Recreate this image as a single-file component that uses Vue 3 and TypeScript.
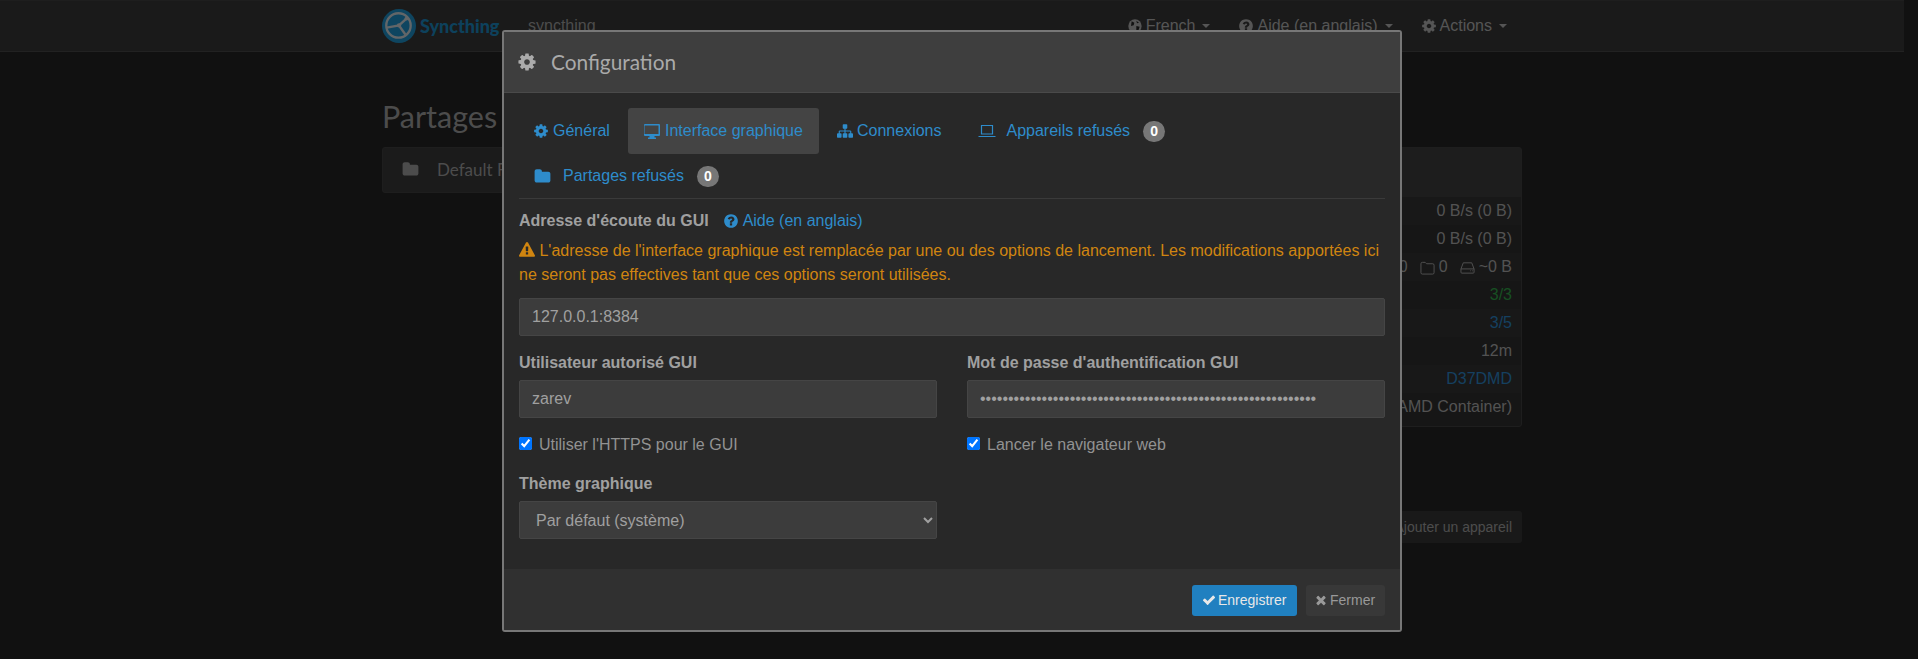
<script setup lang="ts">
const gear = 'M1152 896q0-106-75-181t-181-75-181 75-75 181 75 181 181 75 181-75 75-181zm512-109v222q0 12-8 23t-20 13l-185 28q-19 54-39 91 35 50 107 138 10 12 10 25t-9 23q-27 37-99 108t-94 71q-12 0-26-9l-138-108q-44 23-91 38-16 136-29 186-7 28-36 28h-222q-14 0-24.500-8.500t-11.500-21.500l-28-184q-49-16-90-37l-141 107q-10 9-25 9-14 0-25-11-126-114-165-168-7-10-7-23 0-12 8-23 15-21 51-66.500t54-70.500q-27-50-41-99l-183-27q-13-2-21-12.500t-8-23.500v-222q0-12 8-23t19-13l186-28q14-46 39-92-40-57-107-138-10-12-10-24 0-10 9-23 26-36 98.500-107.500t94.500-71.500q13 0 26 10l138 107q44-23 91-38 16-136 29-186 7-28 36-28h222q14 0 24.500 8.500t11.500 21.500l28 184q49 16 90 37l142-107q9-9 24-9 13 0 25 10 129 119 165 170 7 8 7 22 0 12-8 23-15 21-51 66.500t-54 70.500q26 50 41 98l183 28q13 2 21 12.500t8 23.500z'
const folder = 'M1728 608v704q0 92-66 158t-158 66h-1216q-92 0-158-66t-66-158v-960q0-92 66-158t158-66h320q92 0 158 66t66 158v32h672q92 0 158 66t66 158z'
const sitemap = 'M1792 1248v320q0 40-28 68t-68 28h-320q-40 0-68-28t-28-68v-320q0-40 28-68t68-28h96v-192h-512v192h96q40 0 68 28t28 68v320q0 40-28 68t-68 28h-320q-40 0-68-28t-28-68v-320q0-40 28-68t68-28h96v-192h-512v192h96q40 0 68 28t28 68v320q0 40-28 68t-68 28h-320q-40 0-68-28t-28-68v-320q0-40 28-68t68-28h96v-192q0-52 38-90t90-38h512v-192h-96q-40 0-68-28t-28-68v-320q0-40 28-68t68-28h320q40 0 68 28t28 68v320q0 40-28 68t-68 28h-96v192h512q52 0 90 38t38 90v192h96q40 0 68 28t28 68z'
const question = 'M1024 1376v-192q0-14-9-23t-23-9h-192q-14 0-23 9t-9 23v192q0 14 9 23t23 9h192q14 0 23-9t9-23zm256-672q0-88-55.500-163t-138.500-116-170-41q-243 0-371 213-15 24 8 42l132 100q7 6 19 6 16 0 25-12 53-68 86-92 34-24 86-24 48 0 85.500 26t37.500 59q0 38-20 61t-68 45q-63 28-115.500 86.500t-52.500 125.500v36q0 14 9 23t23 9h192q14 0 23-9t9-23q0-19 21.500-49.500t54.500-49.500q32-18 49-28.500t46-35 44.500-48 28-60.500 12.500-81zm384 192q0 209-103 385.500t-279.500 279.500-385.500 103-385.500-103-279.500-279.500-103-385.500 103-385.500 279.500-279.500 385.500-103 385.500 103 279.500 279.500 103 385.500z'
const warning = 'M1024 1375v-190q0-14-9.500-23.500t-22.500-9.500h-192q-13 0-22.500 9.500t-9.500 23.500v190q0 14 9.500 23.500t22.500 9.500h192q13 0 22.500-9.500t9.500-23.500zm-2-374l18-459q0-12-10-19-13-11-24-11h-220q-11 0-24 11-10 7-10 21l17 457q0 10 10 16.500t24 6.500h185q14 0 23.500-6.500t10.500-16.500zm-14-934l768 1408q35 63-2 126-17 29-46.500 46t-63.500 17h-1536q-34 0-63.500-17t-46.500-46q-37-63-2-126l768-1408q17-31 47-49t65-18 65 18 47 49z'
const check = 'M1671 566q0 40-28 68l-724 724-136 136q-28 28-68 28t-68-28l-136-136-362-362q-28-28-28-68t28-68l136-136q28-28 68-28t68 28l294 295 656-657q28-28 68-28t68 28l136 136q28 28 28 68z'
const times = 'M1490 1322q0 40-28 68l-136 136q-28 28-68 28t-68-28l-294-294-294 294q-28 28-68 28t-68-28l-136-136q-28-28-28-68t28-68l294-294-294-294q-28-28-28-68t28-68l136-136q28-28 68-28t68 28l294 294 294-294q28-28 68-28t68 28l136 136q28 28 28 68t-28 68l-294 294 294 294q28 28 28 68z'
const desktop = 'M1 0h15q1 0 1 1v10q0 1-1 1h-4.500v1.500h1.500v1.500h-8v-1.500h1.500v-1.500h-4.500q-1 0-1-1v-10q0-1 1-1zM1.500 1.500v8.500h14v-8.500z'

const rows = [
  { text: '0 B/s (0 B)', tone: '' },
  { text: '0 B/s (0 B)', tone: '' },
  { text: 'stats', tone: '' },
  { text: '3/3', tone: 'ok' },
  { text: '3/5', tone: 'info' },
  { text: '12m', tone: '' },
  { text: 'D37DMD', tone: 'info' },
  { text: 'Linux (64 bits, AMD Container)', tone: '' },
]
const password = '•'.repeat(60)
</script>

<template>
  <div class="page">
    <header class="navbar">
      <div class="nav-inner">
        <div class="brand">
          <svg class="logo" viewBox="0 0 32 32">
            <circle cx="16" cy="16" r="16" fill="#1c8ac0" />
            <circle cx="15.500" cy="15.500" r="11.500" fill="none" stroke="#c4ccd0" stroke-width="2.200" />
            <path d="M4.500 17.500 16 15.500 23 9M16 15.500 22 24" fill="none" stroke="#c4ccd0" stroke-width="2.200" />
            <circle cx="16" cy="15.500" r="2" fill="#c4ccd0" />
            <circle cx="23" cy="9" r="1.800" fill="#c4ccd0" />
          </svg>
          <span class="brand-name">Syncthing</span>
        </div>
        <span class="host">syncthing</span>
        <nav class="nav-right">
          <span class="nav-item">
            <svg class="ico" viewBox="0 0 24 24"><circle cx="12" cy="12" r="10" fill="currentColor" /><path d="M7 5l4 2-1 4-4 1zM14 12l5 1-2 6-3 1zM14 4l4 3-3 1z" fill="#222" /></svg>
            French<i class="caret"></i>
          </span>
          <span class="nav-item">
            <svg class="ico" viewBox="0 0 1792 1792"><path :d="question" fill="currentColor" /></svg>
            Aide (en anglais)<i class="caret"></i>
          </span>
          <span class="nav-item">
            <svg class="ico" viewBox="0 0 1792 1792"><path :d="gear" fill="currentColor" /></svg>
            Actions<i class="caret"></i>
          </span>
        </nav>
      </div>
    </header>

    <main class="container">
      <section class="col">
        <h1 class="col-title">Partages</h1>
        <div class="panel folder-panel">
          <svg class="ico folder-ico" viewBox="0 0 1792 1792"><path :d="folder" fill="currentColor" /></svg>
          <span class="folder-name">Default Folder</span>
        </div>
      </section>
      <section class="col right-col">
        <div class="panel device-panel">
          <div class="device-head"></div>
          <div v-for="(row, i) in rows" :key="i" class="device-row" :class="row.tone">
            <template v-if="row.text === 'stats'">
              <span class="stat">0</span>
              <svg class="stat-ico" viewBox="0 0 16 16"><path d="M1 13.500V4q0-1.500 1.500-1.500h3L7 4h6.500Q15 4 15 5.500v8Q15 15 13.500 15h-11Q1 15 1 13.500z" fill="none" stroke="currentColor" /></svg>
              <span class="stat">0</span>
              <svg class="stat-ico" viewBox="0 0 16 16"><path d="M1 9.500 3.500 3h9L15 9.500V13q0 1-1 1H2q-1 0-1-1zM1 9.500h14M11 11.500h.8M13 11.500h.8" fill="none" stroke="currentColor" /></svg>
              <span>~0 B</span>
            </template>
            <template v-else>{{ row.text }}</template>
          </div>
        </div>
        <div class="add-row"><span class="add-btn">Ajouter un appareil</span></div>
      </section>
    </main>

    <div class="backdrop"></div>
    <div class="overlay">
      <div class="modal">
        <div class="modal-head">
          <svg class="ico head-ico" viewBox="0 0 1792 1792"><path :d="gear" fill="currentColor" /></svg>
          <h2 class="modal-title">Configuration</h2>
        </div>
        <div class="modal-body">
          <ul class="tabs">
            <li class="tab t-general"><svg class="ico" viewBox="0 0 1792 1792"><path :d="gear" fill="currentColor" /></svg>Général</li>
            <li class="tab t-gui active"><svg class="ico ico-wide" viewBox="0 0 17 15"><path :d="desktop" fill="currentColor" fill-rule="evenodd" /></svg>Interface graphique</li>
            <li class="tab t-conn"><svg class="ico" viewBox="0 0 1792 1792"><path :d="sitemap" fill="currentColor" /></svg>Connexions</li>
            <li class="tab t-dev">
              <svg class="ico laptop" viewBox="0 0 18 16"><path d="M3.500 2.500h11v8.500h-11zM.5 13.500h17" fill="none" stroke="currentColor" stroke-width="1.200" /></svg>
              <span class="tab-text">Appareils refusés</span><span class="badge">0</span>
            </li>
            <li class="tab t-fold">
              <svg class="ico fold" viewBox="0 0 1792 1792"><path :d="folder" fill="currentColor" /></svg>
              <span class="tab-text">Partages refusés</span><span class="badge">0</span>
            </li>
          </ul>

          <div class="field-head">
            <label class="label">Adresse d'écoute du GUI</label>
            <a class="help"><svg class="ico" viewBox="0 0 1792 1792"><path :d="question" fill="currentColor" /></svg>Aide (en anglais)</a>
          </div>
          <p class="warn">
            <svg class="ico warn-ico" viewBox="0 0 1792 1792"><path :d="warning" fill="currentColor" /></svg>
            L'adresse de l'interface graphique est remplacée par une ou des options de lancement. Les modifications apportées ici ne seront pas effectives tant que ces options seront utilisées.
          </p>
          <input class="control" type="text" value="127.0.0.1:8384" readonly />

          <div class="grid">
            <div class="cell">
              <label class="label">Utilisateur autorisé GUI</label>
              <input class="control" type="text" value="zarev" readonly />
              <label class="checkline"><input type="checkbox" checked />Utiliser l'HTTPS pour le GUI</label>
            </div>
            <div class="cell">
              <label class="label">Mot de passe d'authentification GUI</label>
              <input class="control" type="password" :value="password" readonly />
              <label class="checkline"><input type="checkbox" checked />Lancer le navigateur web</label>
            </div>
            <div class="cell">
              <label class="label theme-label">Thème graphique</label>
              <select class="control select">
                <option>Par défaut (système)</option>
              </select>
            </div>
          </div>
        </div>
        <div class="modal-foot">
          <button class="btn primary" type="button"><svg class="ico" viewBox="0 0 1792 1792"><path :d="check" fill="currentColor" /></svg>Enregistrer</button>
          <button class="btn plain" type="button"><svg class="ico" viewBox="0 0 1792 1792"><path :d="times" fill="currentColor" /></svg>Fermer</button>
        </div>
      </div>
    </div>
  </div>
</template>

<style>
html, body { margin: 0; background: #222; }
</style>

<style scoped>
.page {
  width: 1904px;
  height: 659px;
  overflow: hidden;
  font-family: "Liberation Sans", Arial, sans-serif;
  font-size: 16px;
  color: #bbb;
}
.ico { width: 1em; height: 1em; flex: none; }
.navbar {
  height: 52px;
  box-sizing: border-box;
  background: #353535;
  border-bottom: 1px solid #444;
  border-top: 1px solid #3c3c3c;
}
.nav-inner {
  width: 1140px;
  margin: 0 auto;
  height: 100%;
  display: flex;
  align-items: center;
}
.logo { width: 34px; height: 34px; }
.brand { display: flex; align-items: center; gap: 4px; width: 146px; }
.brand-name { font-family: Lato, sans-serif; font-weight: 900; font-size: 18px; color: #1a82b8; }
.host { color: #999; }
.nav-right { margin-left: auto; display: flex; gap: 28px; padding-right: 15px; color: #aaa; }
.nav-item { display: flex; align-items: center; gap: 3px; }
.caret {
  width: 0; height: 0; margin-left: 4px;
  border-top: 4px solid currentColor;
  border-left: 4px solid transparent;
  border-right: 4px solid transparent;
}
.container {
  width: 1140px;
  margin: 0 auto;
  display: flex;
  gap: 30px;
}
.col { flex: 1; min-width: 0; }
.col-title {
  margin: 45px 0 12px;
  font-family: Lato, sans-serif;
  font-weight: 400;
  font-size: 30.500px;
  line-height: 38px;
  color: #999;
}
.panel { background: #363636; border: 1px solid #3d3d3d; border-radius: 3px; box-sizing: border-box; }
.folder-panel {
  height: 46px; display: flex; align-items: center; padding: 0 0 2px 19px;
  color: #999; font-family: Lato, sans-serif; font-size: 17px;
}
.folder-name { margin-left: 18px; }
.right-col { padding-top: 95px; }
.device-panel { height: 280px; background: #2c2c2c; }
.device-head { height: 49px; background: #3a3a3a; }
.device-row {
  height: 28px; line-height: 28px; padding-right: 9px;
  display: flex; justify-content: flex-end; align-items: center; gap: 4px;
  color: #a5a5a5;
}
.device-row:nth-child(even) { background: #303030; }
.device-row.ok { color: #2e9e45; }
.device-row.info { color: #2a80c0; }
.stat { margin-right: 8px; }
.stat-ico { width: 15px; height: 15px; }
.add-row { display: flex; justify-content: flex-end; margin-top: 84px; }
.add-btn {
  background: #333; color: #999; font-size: 14px; line-height: 32px;
  padding: 0 10px; border-radius: 3px;
}
.backdrop { position: fixed; inset: 0; background: rgba(0, 0, 0, 0.5); }
.overlay { position: fixed; top: 0; left: 0; width: 1904px; height: 100%; }
.modal {
  width: 900px;
  margin: 30px auto 0;
  box-sizing: border-box;
  background: #282828;
  border: 2px solid #777;
  border-radius: 3px;
  overflow: hidden;
}
.modal-head {
  height: 61px;
  box-sizing: border-box;
  background: #3e3e3e;
  border-bottom: 1px solid #4a4a4a;
  display: flex;
  align-items: center;
  padding: 0 15px 1px 13px;
  color: #aaa;
}
.head-ico { font-size: 20px; }
.modal-title {
  margin: 0 0 0 14px;
  font-family: Lato, sans-serif;
  font-weight: 400;
  font-size: 20.800px;
  color: #aaa;
}
.modal-body { padding: 15px 15px 30px; }
.tabs {
  list-style: none;
  margin: 0;
  padding: 0;
  display: flex;
  flex-wrap: wrap;
  height: 90px;
  align-content: flex-start;
  border-bottom: 1px solid #3a3a3a;
}
.tab {
  height: 46px;
  box-sizing: border-box;
  display: flex;
  align-items: center;
  padding: 0 15px;
  color: #2e8ccb;
  border-radius: 3px;
  margin-right: 2px;
}
.tab .ico { margin-right: 4px; }
.tab.active { background: #444; }
.tab .ico-wide { font-size: 17px; width: 17px; height: 15px; margin-right: 5px; }
.t-general { width: 107px; padding-left: 14px; }
.t-gui { padding-left: 15px; width: 191px; }
.t-conn { padding-left: 16px; }
.t-dev { margin-left: 4px; }
.t-dev .laptop { width: 18px; height: 16px; margin-right: 11px; }
.t-fold { margin-top: -1px; flex-basis: 100%; }
.t-fold .fold { font-size: 17px; margin-right: 12px; }
.tab-text { margin-right: 13px; }
.badge {
  background: #777; color: #fff; font-size: 14px; font-weight: 700;
  min-width: 8px; height: 21px; line-height: 21px; text-align: center;
  border-radius: 11px; padding: 0 7px;
}
.field-head { display: flex; align-items: center; height: 23px; margin-top: 10px; }
.label { font-weight: 700; color: #a0a0a0; display: block; }
.help { margin-left: 14px; color: #2e8ccb; display: flex; align-items: center; gap: 4px; }
.warn { margin: 7px 0 11px; color: #d08510; line-height: 24px; }
.warn-ico { vertical-align: -2px; }
.control {
  display: block;
  width: 100%;
  height: 38px;
  box-sizing: border-box;
  background: #3c3c3c;
  border: 1px solid #454545;
  border-radius: 2px;
  color: #a0a0a0;
  font: 16px "Liberation Sans", Arial, sans-serif;
  padding: 0 12px;
  outline: none;
}
.select { padding: 0 12px; }
.grid {
  display: grid;
  grid-template-columns: 418px 418px;
  column-gap: 30px;
  margin-top: 15px;
}
.cell .label { line-height: 23px; margin-bottom: 6px; }
.checkline {
  display: flex; align-items: center; height: 23px;
  margin-top: 15px; color: #929292;
}
.checkline input { margin: 0 7px 2px 0; width: 13px; height: 13px; }
.theme-label { margin-top: 16px; }
.modal-foot {
  height: 61px;
  box-sizing: border-box;
  background: #303030;
  display: flex;
  justify-content: flex-end;
  align-items: flex-start;
  gap: 9px;
  padding: 16px 15px 0;
}
.btn {
  height: 31px;
  box-sizing: border-box;
  border: 1px solid transparent;
  border-radius: 3px;
  font: 14px "Liberation Sans", Arial, sans-serif;
  display: flex;
  align-items: center;
  gap: 2px;
  padding: 0 9px 2px;
}
.primary { background: #2080c0; color: #e8e8e8; width: 105px; }
.plain { background: #383838; color: #999; width: 79px; padding-left: 7px; }
</style>
